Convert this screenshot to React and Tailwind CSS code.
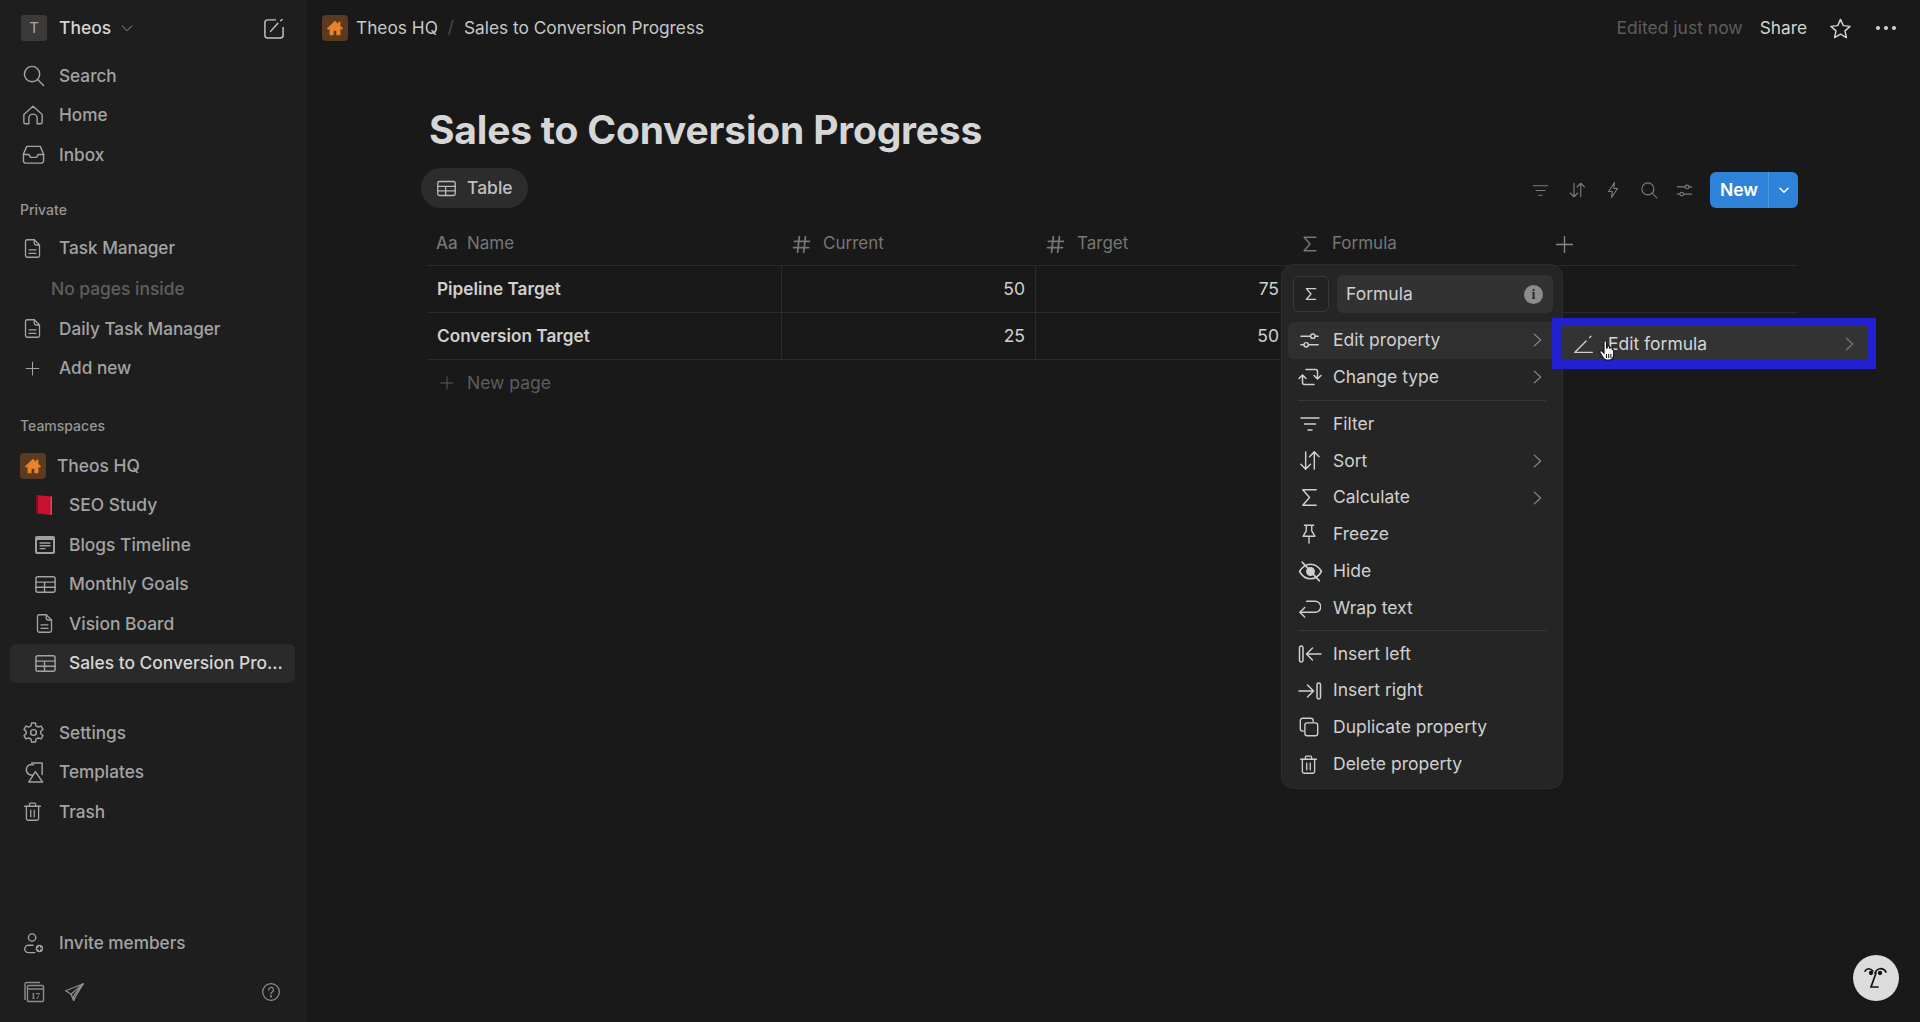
import React from "react";

const Ico = ({ s = 24, w = 1.5, vb = 24, className = "", children }) => (
  <svg width={s} height={s} viewBox={`0 0 ${vb} ${vb}`} fill="none" stroke="currentColor" strokeWidth={w} strokeLinecap="round" strokeLinejoin="round" className={"shrink-0 " + className}>{children}</svg>
);

const Search = (p) => <Ico {...p}><circle cx="10.5" cy="10.5" r="8" /><path d="M16.5 16.5l6 6" /></Ico>;
const Home = (p) => <Ico {...p}><path d="M2 11.5 12 2.5l10 9v8a2 2 0 0 1-2 2h-3.5v-6a4.5 4.5 0 0 0-9 0v6H4a2 2 0 0 1-2-2z" /></Ico>;
const Inbox = (p) => <Ico {...p}><path d="M5 3.5h14l3.5 8v7a2.5 2.5 0 0 1-2.5 2.500H4a2.5 2.5 0 0 1-2.500-2.500v-7z" /><path d="M1.5 12H7l2 3h6l2-3h5.5" /></Ico>;
const Doc = (p) => <Ico {...p}><path d="M6 2h8l6 6v12a2 2 0 0 1-2 2H6a2 2 0 0 1-2-2V4a2 2 0 0 1 2-2z" /><path d="M14 2v4a2 2 0 0 0 2 2h4M8 13.5h8M8 17.5h8" /></Ico>;
const Plus = (p) => <Ico {...p}><path d="M12 3v18M3 12h18" /></Ico>;
const TableI = (p) => <Ico {...p}><rect x="2" y="4" width="20" height="16" rx="2" /><path d="M2 9.5h20M2 14.8h20M11 9.5V20" /></Ico>;
const Gear = (p) => <Ico {...p}><circle cx="12" cy="12" r="3" /><path d="M10 2h4l.6 3 2.400 1.300 2.900-1 2 3.400-2.300 2v2.600l2.300 2-2 3.400-2.900-1-2.400 1.300-.6 3h-4l-.6-3L7 17.700l-2.900 1-2-3.400 2.300-2v-2.600l-2.300-2 2-3.400 2.900 1L9.400 5z" /></Ico>;
const Shapes = (p) => <Ico {...p}><path d="M11 14.500a5.500 5.500 0 1 1 1-10.500" /><path d="M10 2h11v12" /><path d="M14 11l7.500 11H7z" /></Ico>;
const Trash = (p) => <Ico {...p}><path d="M3 6h18M8.500 6V3.500a1 1 0 0 1 1-1h5a1 1 0 0 1 1 1V6" /><path d="M5 6v14a2 2 0 0 0 2 2h10a2 2 0 0 0 2-2V6M10 10.500V18M14 10.500V18" /></Ico>;
const Invite = (p) => <Ico {...p}><circle cx="11" cy="6" r="4" /><path d="M12 14.500H7a4 4 0 0 0 0 8h7" /><circle cx="19" cy="18" r="4" fill="currentColor" stroke="none" /><path d="M19 16v4M17 18h4" stroke="#1e1e1e" /></Ico>;
const Send = (p) => <Ico {...p}><path d="M22 2 2 10l6 4 3 7 2.500-5L22 2z" /><path d="M8 14 22 2 11 16v5" /></Ico>;
const Help = (p) => <Ico {...p}><circle cx="12" cy="12" r="10" /><path d="M9.200 9.500a2.900 2.900 0 1 1 4.300 2.500c-1 .6-1.500 1.200-1.500 2.200" /><circle cx="12" cy="17.300" r=".6" fill="currentColor" /></Ico>;
const Compose = (p) => <Ico {...p}><path d="M14 3H6a3 3 0 0 0-3 3v13a3 3 0 0 0 3 3h13a3 3 0 0 0 3-3v-8" /><path d="M9 15l7.500-8.500M21 2.500 19.500 4" /></Ico>;
const Chevron = (p) => <Ico {...p}><path d="M9 5.500l7 6.500-7 6.500" /></Ico>;
const ChevDown = (p) => <Ico {...p}><path d="M5 9l7 7 7-7" /></Ico>;
const Star = (p) => <Ico {...p}><path d="M12 2.500l2.900 6.500 7.100.8-5.300 4.700 1.500 7-6.200-3.600-6.200 3.600 1.500-7L2 9.800 9.100 9z" /></Ico>;
const Filter = (p) => <Ico {...p}><path d="M3 6h18M6.500 12h11M10 18h4" /></Ico>;
const Sort = (p) => <Ico {...p}><path d="M8 3v18M3 16l5 5 5-5M17 21V3M12 8l5-5 5 5" /></Ico>;
const Bolt = (p) => <Ico {...p}><path d="M14 2 6 14h5l-1 8 8-12h-5z" /></Ico>;
const Sliders = (p) => <Ico {...p}><path d="M3 7.500h10M18 7.500h3M3 16.500h3M11 16.500h10" /><circle cx="15.500" cy="7.500" r="2.300" /><circle cx="8.500" cy="16.500" r="2.300" /></Ico>;
const Hash = (p) => <Ico {...p}><path d="M9.500 3 7.500 21M16.500 3l-2 18M4 8.500h17M3 15.500h17" /></Ico>;
const Sigma = (p) => <Ico {...p}><path d="M19 4H5l7 8-7 8h14" /></Ico>;
const Change = (p) => <Ico {...p}><path d="M1 13.500l3.500-3.500L8 13.500M4.500 10v7.500a2 2 0 0 0 2 2H16M23 10.500 19.500 14 16 10.500M19.500 14V6.500a2 2 0 0 0-2-2H8" /></Ico>;
const Pin = (p) => <Ico {...p}><path d="M7 2.500h10M9 2.500v6L5.500 14.500h13L15 8.500v-6M12 14.500V22" /></Ico>;
const Hide = (p) => <Ico {...p}><path d="M1.500 12C4 7.500 7.500 5 12 5s8 2.500 10.500 7c-2.500 4.500-6 7-10.500 7s-8-2.500-10.500-7z" /><circle cx="12" cy="12" r="3.500" fill="currentColor" /><path d="M4 3l16.500 18" /></Ico>;
const Wrap = (p) => <Ico {...p}><path d="M9 5.500h9a5.500 5.500 0 0 1 0 11.500H2" /><path d="M7 12l-5 5 5 5" /></Ico>;
const InsL = (p) => <Ico {...p}><rect x="1.500" y="4" width="3.500" height="16" rx="1.700" /><path d="M23 12H9M14.500 6 8.500 12l6 6" /></Ico>;
const InsR = (p) => <Ico {...p}><rect x="19" y="4" width="3.500" height="16" rx="1.700" /><path d="M1 12h14M9.500 6l6 6-6 6" /></Ico>;
const Copy = (p) => <Ico {...p}><path d="M6 16.500H5a2.500 2.500 0 0 1-2.500-2.500V5A2.500 2.500 0 0 1 5 2.500h9A2.500 2.500 0 0 1 16.500 5v1" /><rect x="7.500" y="7.500" width="14" height="14" rx="2.500" /></Ico>;
const Pencil = (p) => <Ico {...p}><path d="M2 21h20M3 20 15 8M19 4l1.500-1.500" /></Ico>;

const HouseEmoji = ({ box = 26, s = 18 }) => (
  <div style={{ width: box, height: box }} className="flex shrink-0 items-center justify-center rounded-[4px] bg-[#5a3b22]">
    <svg width={s} height={s} viewBox="0 0 20 20"><path d="M10 2 1 10.500l1.500 1.500L4 10.700V18h4.500v-5h3v5H16v-7.300l1.500 1.300 1.500-1.500-3-2.800V3h-2.500v2.500z" fill="#e8832a" /></svg>
  </div>
);
const Book = () => (
  <svg width="20" height="22" viewBox="0 0 20 22"><path d="M2 1 18 2.500v18.500L3 19.500z" fill="#c41230" /><path d="M2 1v18.500l2 .2V1.200z" fill="#7d1020" /><path d="M16.500 2.400v18.400l1.500.2V2.500z" fill="#e8405a" /></svg>
);
const Blog = () => (
  <svg width="22" height="20" viewBox="0 0 22 20"><rect x="1" y="1" width="20" height="18" rx="2" fill="#a0a0a0" /><rect x="3" y="5" width="16" height="12" rx="1" fill="#1e1e1e" /><path d="M5.500 8h11M5.500 10.800h11M5.500 13.600h6" stroke="#a0a0a0" strokeWidth="1.400" /></svg>
);
const Calendar = () => (
  <svg width="22" height="22" viewBox="0 0 22 22" fill="none" stroke="currentColor" strokeWidth="1.400">
    <path d="M2 19V3a1.500 1.500 0 0 1 1.500-1.500H17" />
    <rect x="4.500" y="4.500" width="16" height="16" rx="1" />
    <path d="M4.500 8h16" />
    <text x="12.500" y="18" textAnchor="middle" fontSize="9" fontWeight="700" fontFamily="'Liberation Serif',serif" fill="currentColor" stroke="none">17</text>
  </svg>
);

const SideRow = ({ icon, label, indent = false, active = false }) => (
  <div className={`flex h-[39.5px] items-center ${active ? "rounded-md bg-[#2a2a2a] text-[#d6d6d6]" : "text-[#a3a3a3]"} ${indent ? "pl-[24px]" : "pl-[12px]"} pr-2`}>
    <div className={`flex ${indent ? "w-[35px]" : "w-[37px]"} shrink-0 items-center justify-start`}>{icon}</div>
    <span className={`truncate font-medium ${indent ? "text-[17.4px]" : "text-[17.2px]"}`}>{label}</span>
  </div>
);

const MenuRow = ({ icon, label, arrow, active }) => (
  <div className={`flex h-[36.8px] items-center rounded-md pl-[10px] pr-[8px] ${active ? "bg-[#2f2f2f]" : ""}`}>
    <div className="flex w-[35px] shrink-0 items-center text-[#cfcfcf]">{icon}</div>
    <span className="flex-1 text-[17.5px] text-[#d0d0d0]">{label}</span>
    {arrow && <Chevron s={22} w={1.2} className="text-[#8a8a8a]" />}
  </div>
);

export default function App() {
  return (
    <div className="flex h-[1022px] w-[1920px] overflow-hidden bg-[#191919] font-['Inter',sans-serif]">
      <aside className="flex w-[306px] shrink-0 flex-col border-r border-[#242424] bg-[#1e1e1e]">
        <div className="flex h-[56px] items-center pl-[21px] pr-[20px]">
          <div className="flex h-[26px] w-[26px] items-center justify-center rounded-[3px] bg-[#3a3a3a] text-[15px] text-[#a8a8a8]">T</div>
          <span className="ml-[12px] text-[17.5px] font-medium text-[#d4d4d4]">Theos</span>
          <ChevDown s={16} className="ml-[8px] text-[#8e8e8e]" />
          <Compose s={23} className="ml-auto text-[#c4c4c4]" />
        </div>
        <div className="px-[10px]">
          <SideRow icon={<Search s={23} />} label="Search" />
          <SideRow icon={<Home s={22} />} label="Home" />
          <SideRow icon={<Inbox s={23} />} label="Inbox" />
        </div>
        <div className="mt-[27px] flex h-[16px] items-center pl-[20px] text-[14px] font-medium text-[#969696]">Private</div>
        <div className="mt-[11px] px-[10px]">
          <SideRow icon={<Doc s={21} />} label="Task Manager" />
          <div className="flex h-[41px] items-center pl-[41px] pt-[2px] text-[17.4px] font-medium text-[#5f5f5f]">No pages inside</div>
          <SideRow icon={<Doc s={21} />} label="Daily Task Manager" />
          <SideRow icon={<Plus s={17} className="ml-[2px]" />} label="Add new" />
        </div>
        <div className="mt-[29px] flex h-[16px] items-center pl-[20px] text-[14px] font-medium text-[#969696]">Teamspaces</div>
        <div className="mt-[13px] px-[10px]">
          <div className="flex h-[39.5px] items-center pl-[10px] text-[#a3a3a3]">
            <HouseEmoji />
            <span className="ml-[11px] text-[17.4px] font-medium">Theos HQ</span>
          </div>
          <SideRow indent icon={<Book />} label="SEO Study" />
          <SideRow indent icon={<Blog />} label="Blogs Timeline" />
          <SideRow indent icon={<TableI s={23} />} label="Monthly Goals" />
          <SideRow indent icon={<Doc s={21} />} label="Vision Board" />
          <SideRow indent active icon={<TableI s={23} className="text-[#a3a3a3]" />} label="Sales to Conversion Pro..." />
        </div>
        <div className="mt-[30px] px-[10px]">
          <SideRow icon={<Gear s={23} />} label="Settings" />
          <SideRow icon={<Shapes s={23} />} label="Templates" />
          <SideRow icon={<Trash s={21} />} label="Trash" />
        </div>
        <div className="mt-auto px-[10px]">
          <SideRow icon={<Invite s={22} />} label="Invite members" />
        </div>
        <div className="mt-[18px] mb-[19px] flex h-[22px] items-center pl-[23px] pr-[24px] text-[#8e8e8e]">
          <Calendar />
          <Send s={21} className="ml-[19px]" />
          <Help s={20} className="ml-auto" />
        </div>
      </aside>

      <main className="relative flex min-w-0 flex-1 flex-col">
        <header className="flex h-[56px] items-center pl-[16px] pr-[24px]">
          <HouseEmoji />
          <span className="ml-[8px] text-[17.3px] text-[#c8c8c8]">Theos HQ</span>
          <span className="mx-[10px] text-[17px] text-[#4c4c4c]">/</span>
          <span className="text-[17.3px] text-[#c8c8c8]">Sales to Conversion Progress</span>
          <span className="ml-auto text-[17.5px] text-[#5d5d5d]">Edited just now</span>
          <span className="ml-[17px] mr-[1px] text-[17.3px] text-[#d4d4d4]">Share</span>
          <Star s={23} className="ml-[21px] text-[#d4d4d4]" />
          <div className="ml-[24px] flex gap-[4px]">
            <i className="h-[4px] w-[4px] rounded-full bg-[#d4d4d4]" />
            <i className="h-[4px] w-[4px] rounded-full bg-[#d4d4d4]" />
            <i className="h-[4px] w-[4px] rounded-full bg-[#d4d4d4]" />
          </div>
        </header>

        <div className="flex flex-col pl-[115px] pr-[122px]">
          <h1 className="mt-[50px] h-[48px] pl-[8px] text-[39px] font-bold leading-[48px] tracking-[-0.2px] text-[#d6d6d6]">Sales to Conversion Progress</h1>
          <div className="mt-[14px] flex h-[40px] items-center">
            <div className="flex h-[40px] w-[107px] items-center rounded-full bg-[#2c2c2c] pl-[15px]">
              <TableI s={21} className="text-[#b8b8b8]" />
              <span className="ml-[10px] text-[17.5px] font-medium text-[#c0c0c0]">Table</span>
            </div>
            <div className="ml-auto mt-[4px] flex items-center text-[#7c7c7c]">
              <Filter s={19} />
              <Sort s={18} className="ml-[18px]" />
              <Bolt s={18} className="ml-[18px]" />
              <Search s={18} className="ml-[18px]" />
              <Sliders s={19} className="ml-[17px]" />
              <div className="ml-[16px] flex h-[36px] w-[88px] items-center rounded-[6px] bg-[#2e83d9] text-white">
                <span className="w-[58px] text-center text-[17.5px] font-semibold">New</span>
                <div className="flex h-full flex-1 items-center justify-center border-l border-[#4f97e0]">
                  <ChevDown s={14} w={2.4} />
                </div>
              </div>
            </div>
          </div>

          <div className="mt-[13px] ml-[6px]">
            <div className="flex h-[45px] items-center border-b border-[#2b2b2b] pt-[2px] text-[17px] text-[#767676]">
              <div className="flex w-[354px] items-center pl-[9px]">
                <span className="w-[31px] text-[17px] font-medium">Aa</span><span>Name</span>
              </div>
              <div className="flex w-[254px] items-center pl-[10px]">
                <Hash s={21} w={2} /><span className="ml-[11px]">Current</span>
              </div>
              <div className="flex w-[255px] items-center pl-[10px]">
                <Hash s={21} w={2} /><span className="ml-[11px]">Target</span>
              </div>
              <div className="flex w-[264px] items-center pl-[10px]">
                <Sigma s={20} w={1.8} /><span className="ml-[12px]">Formula</span>
              </div>
              <Plus s={21} className="text-[#8a8a8a]" />
            </div>
            {[
              ["Pipeline Target", "50", "75"],
              ["Conversion Target", "25", "50"],
            ].map(([n, a, b]) => (
              <div key={n} className="flex h-[47px] items-center border-b border-[#2b2b2b] text-[17.5px] text-[#d0d0d0]">
                <div className="flex h-full w-[354px] items-center pl-[10px] text-[17.2px] font-semibold">{n}</div>
                <div className="flex h-full w-[254px] items-center justify-end border-l border-[#2b2b2b] pr-[10px]">{a}</div>
                <div className="flex h-full w-[255px] items-center justify-end border-l border-[#2b2b2b] pr-[11px]">{b}</div>
              </div>
            ))}
            <div className="flex h-[46px] items-center pl-[12px] text-[17.5px] text-[#5d5d5d]">
              <Plus s={16} />
              <span className="ml-[12px]">New page</span>
            </div>
          </div>
        </div>

        {/* column menu */}
        <div className="absolute left-[976px] top-[265px] flex h-[523px] w-[280px] flex-col rounded-[12px] bg-[#252525] px-[6px] pt-[10px] shadow-[0_0_0_1px_#2c2c2c]">
          <div className="flex h-[38px] items-center gap-[8px] pl-[5px] pr-[3px]">
            <div className="flex h-[36px] w-[36px] items-center justify-center rounded-[6px] border border-[#383838] bg-[#222222] text-[#d0d0d0]">
              <Sigma s={16} w={2} />
            </div>
            <div className="flex h-[38px] flex-1 items-center rounded-[6px] bg-[#323232] pl-[9px] pr-[10px]">
              <span className="flex-1 text-[17.5px] text-[#d0d0d0]">Formula</span>
              <div className="flex h-[19px] w-[19px] items-center justify-center rounded-full bg-[#8c8c8c] font-['Liberation_Serif',serif] text-[14px] font-bold text-[#2c2c2c]">i</div>
            </div>
          </div>
          <div className="mt-[9px]">
            <MenuRow active icon={<Sliders s={23} />} label="Edit property" arrow />
            <MenuRow icon={<Change s={24} />} label="Change type" arrow />
          </div>
          <div className="mx-[10px] mb-[5px] mt-[4px] border-t border-[#383838]" />
          <div>
            <MenuRow icon={<Filter s={24} />} label="Filter" />
            <MenuRow icon={<Sort s={23} />} label="Sort" arrow />
            <MenuRow icon={<Sigma s={23} />} label="Calculate" arrow />
            <MenuRow icon={<Pin s={22} />} label="Freeze" />
            <MenuRow icon={<Hide s={25} />} label="Hide" />
            <MenuRow icon={<Wrap s={23} />} label="Wrap text" />
          </div>
          <div className="mx-[10px] my-[4px] border-t border-[#383838]" />
          <div>
            <MenuRow icon={<InsL s={24} />} label="Insert left" />
            <MenuRow icon={<InsR s={24} />} label="Insert right" />
            <MenuRow icon={<Copy s={22} />} label="Duplicate property" />
            <MenuRow icon={<Trash s={21} />} label="Delete property" />
          </div>
        </div>

        {/* highlighted submenu */}
        <div className="absolute left-[1246px] top-[318px] h-[51px] w-[324px] border-[9px] border-t-[8px] border-[#2121cf] bg-[#333333]">
          <div className="flex h-full items-center pl-[12px] pr-[7px] pt-[2px]">
            <Pencil s={21} className="text-[#d0d0d0]" />
            <span className="ml-[14px] flex-1 text-[17.5px] text-[#d6d6d6]">Edit formula</span>
            <Chevron s={22} w={1.2} className="text-[#7e7e7e]" />
          </div>
        </div>

        {/* pointer */}
        <svg width="16" height="22" viewBox="0 0 16 22" className="absolute left-[1293px] top-[340px]">
          <path d="M5 2a1.300 1.300 0 0 1 2.600 0v6h.6V7a1.200 1.200 0 0 1 2.400.2v1h.5a1.100 1.100 0 0 1 2.200.3v1a1 1 0 0 1 1.400.6v4.400c0 2.500-1.500 5-4 5.500H7.500c-1.500 0-2.500-1-3.300-2.300L1 12.500c-.7-1.300.9-2.500 2-1.300l2 2z" fill="#f4f4f4" stroke="#111" strokeWidth="1.1" />
          <path d="M7.500 14v4M9.700 14v4M11.900 14v4" stroke="#111" strokeWidth="1" />
        </svg>

        {/* floating help */}
        <div className="absolute bottom-[21px] right-[21px] flex h-[46px] w-[46px] items-center justify-center rounded-full bg-[#dcdcdc] text-[#111]">
          <svg width="26" height="28" viewBox="0 0 26 28" fill="none" stroke="currentColor" strokeWidth="1.7" strokeLinecap="round">
            <path d="M2 7c2-3 5-3 8 0M12 9c2-5 8-6 11-1" />
            <circle cx="8" cy="9" r="1.300" fill="currentColor" /><circle cx="17" cy="9" r="1.300" fill="currentColor" />
            <path d="M13 9 8 23h7" />
          </svg>
        </div>
      </main>
    </div>
  );
}
